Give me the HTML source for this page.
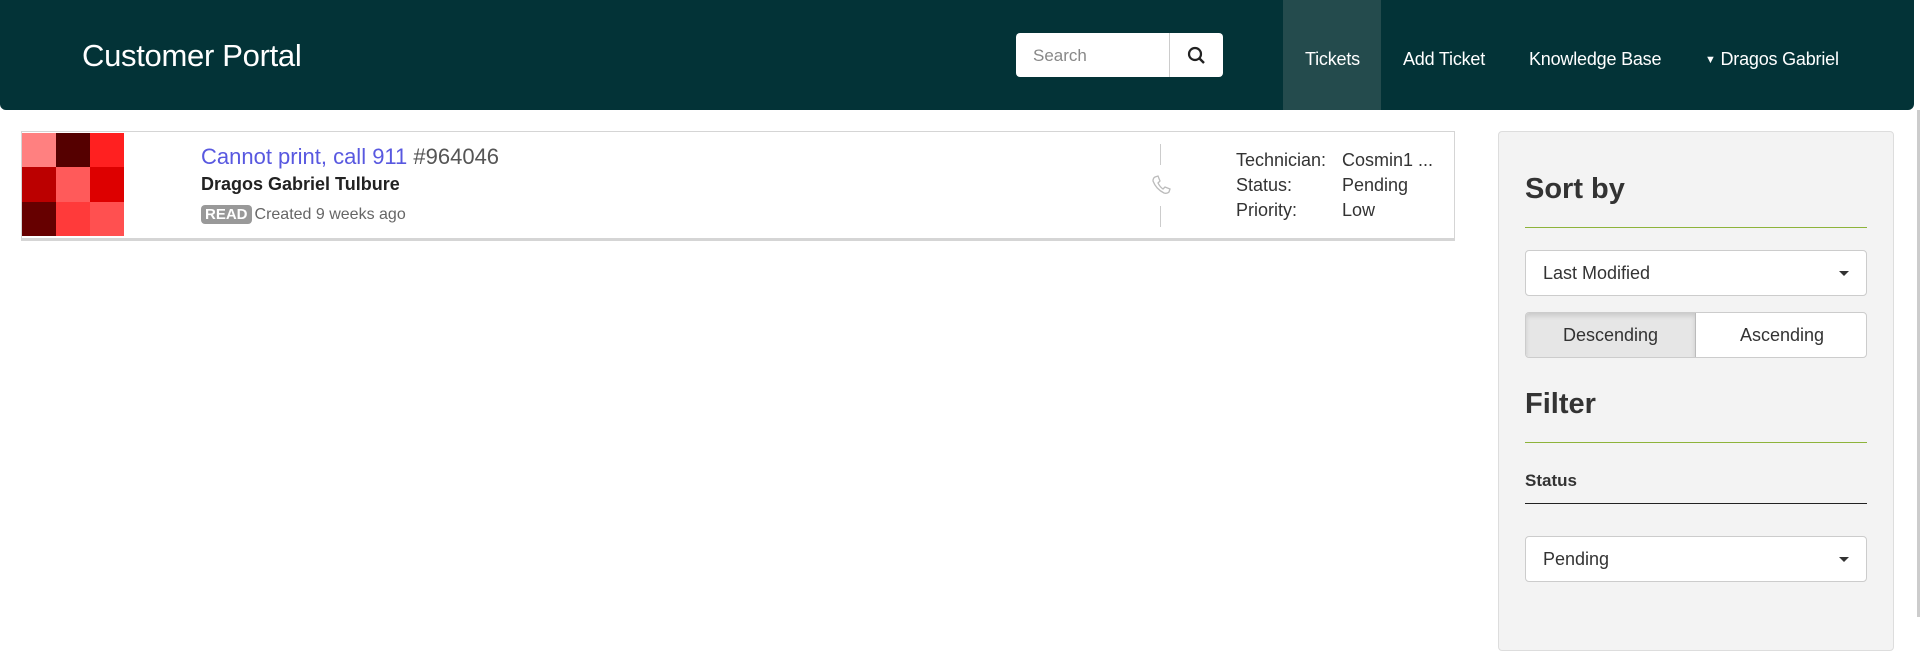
<!DOCTYPE html>
<html><head><meta charset="utf-8"><style>
*{box-sizing:border-box;margin:0;padding:0}
body{width:1920px;height:617px;overflow:hidden;background:#fff;font-family:"Liberation Sans",Arial,sans-serif;position:relative}
.hdr{position:absolute;left:0;top:0;width:1914px;height:110px;background:#033337;border-radius:0 0 6px 6px}
.title{position:absolute;left:82px;top:38px;color:#fff;font-size:31px;letter-spacing:-0.3px}
.search{position:absolute;left:1016px;top:33px;width:207px;height:44px;background:#fff;border-radius:4px}
.search span{position:absolute;left:17px;top:13px;color:#888;font-size:17px}
.search .sep{position:absolute;left:153px;top:0;width:1px;height:44px;background:#ccc}
.active{position:absolute;left:1283px;top:0;width:98px;height:110px;background:#244b4d}
.nav{position:absolute;top:49px;color:#fff;font-size:18px;letter-spacing:-0.2px}
.card{position:absolute;left:21px;top:131px;width:1434px;height:110px;border:1px solid #d5d5d5;border-bottom:3px solid #d5d5d5}
.av{position:absolute;left:22px;top:133px;width:102px;height:103px;display:grid;grid-template-columns:repeat(3,1fr);grid-template-rows:repeat(3,1fr)}
.t1{position:absolute;left:201px;top:144px;font-size:22px;color:#5858e0}
.t1 span{color:#555}
.t2{position:absolute;left:201px;top:174px;font-size:18px;font-weight:bold;color:#222}
.t3{position:absolute;left:201px;top:205px;font-size:16px;color:#666}
.badge{display:inline-block;background:#999;color:#fff;font-weight:bold;border-radius:4px;padding:1px 4px;font-size:15px;margin-right:3px}
.info{position:absolute;font-size:18px;color:#333}
.side{position:absolute;left:1498px;top:131px;width:396px;height:520px;background:#f3f3f3;border:1px solid #ddd;border-radius:4px}
.h{position:absolute;left:1525px;font-size:29px;font-weight:bold;color:#333}
.gl{position:absolute;left:1525px;width:342px;height:1px;background:#8db33a}
.sel{position:absolute;left:1525px;width:342px;height:46px;background:#fff;border:1px solid #ccc;border-radius:4px;font-size:18px;color:#333;padding:12px 17px}
.sel:after{content:"";position:absolute;right:17px;top:20px;border:5px solid transparent;border-top:5px solid #333}
</style></head><body>
<div class="hdr"></div>
<div class="title">Customer Portal</div>
<div class="search"><span>Search</span><div class="sep"></div>
<svg style="position:absolute;left:171px;top:13px" width="19" height="19" viewBox="0 0 19 19"><circle cx="8" cy="8" r="6" fill="none" stroke="#222" stroke-width="2.2"/><line x1="12.5" y1="12.5" x2="17" y2="17" stroke="#222" stroke-width="2.4"/></svg></div>
<div class="active"></div>
<div class="nav" style="left:1305px">Tickets</div>
<div class="nav" style="left:1403px">Add Ticket</div>
<div class="nav" style="left:1529px">Knowledge Base</div>
<div class="nav" style="left:1705px"><span style="font-size:11px;vertical-align:2px">▼</span> Dragos Gabriel</div>
<div style="position:absolute;left:1917px;top:110px;width:3px;height:507px;background:#ccc"></div>

<div class="card"></div>
<div class="av">
<div style="background:#ff8080"></div><div style="background:#550000"></div><div style="background:#ff2020"></div>
<div style="background:#bb0000"></div><div style="background:#ff5a5a"></div><div style="background:#dd0000"></div>
<div style="background:#660000"></div><div style="background:#ff3a3a"></div><div style="background:#ff5050"></div>
</div>
<div class="t1">Cannot print, call 911 <span>#964046</span></div>
<div class="t2">Dragos Gabriel Tulbure</div>
<div class="t3"><span class="badge">READ</span>Created 9 weeks ago</div>
<div style="position:absolute;left:1160px;top:144px;width:1px;height:21px;background:#ccc"></div>
<div style="position:absolute;left:1160px;top:206px;width:1px;height:21px;background:#ccc"></div>
<svg style="position:absolute;left:1151px;top:175px" width="20" height="20" viewBox="0 0 20 20"><path d="M4 2 L7 1 L9 6 L7 8 Q9 12 12 14 L14 12 L19 14 L18 17 Q16 19 13 18 Q5 14 2 6 Q2 3 4 2Z" fill="none" stroke="#bbb" stroke-width="1.3"/></svg>
<div class="info" style="left:1236px;top:150px">Technician:</div><div class="info" style="left:1342px;top:150px">Cosmin1 ...</div>
<div class="info" style="left:1236px;top:175px">Status:</div><div class="info" style="left:1342px;top:175px">Pending</div>
<div class="info" style="left:1236px;top:200px">Priority:</div><div class="info" style="left:1342px;top:200px">Low</div>

<div class="side"></div>
<div class="h" style="top:173px">Sort by</div>
<div class="gl" style="top:227px"></div>
<div class="sel" style="top:250px">Last Modified</div>
<div style="position:absolute;left:1525px;top:312px;width:342px;height:46px;border:1px solid #ccc;border-radius:4px;background:#fff;overflow:hidden;font-size:18px;color:#333">
<div style="position:absolute;left:0;top:0;width:170px;height:46px;background:#e6e6e6;box-shadow:inset 0 3px 5px rgba(0,0,0,.12);border-right:1px solid #bbb;text-align:center;line-height:44px">Descending</div>
<div style="position:absolute;left:170px;top:0;width:172px;height:46px;text-align:center;line-height:44px">Ascending</div></div>
<div class="h" style="top:388px">Filter</div>
<div class="gl" style="top:442px"></div>
<div style="position:absolute;left:1525px;top:471px;font-size:17px;font-weight:bold;color:#333">Status</div>
<div style="position:absolute;left:1525px;top:503px;width:342px;height:1px;background:#222"></div>
<div class="sel" style="top:536px">Pending</div>
</body></html>
